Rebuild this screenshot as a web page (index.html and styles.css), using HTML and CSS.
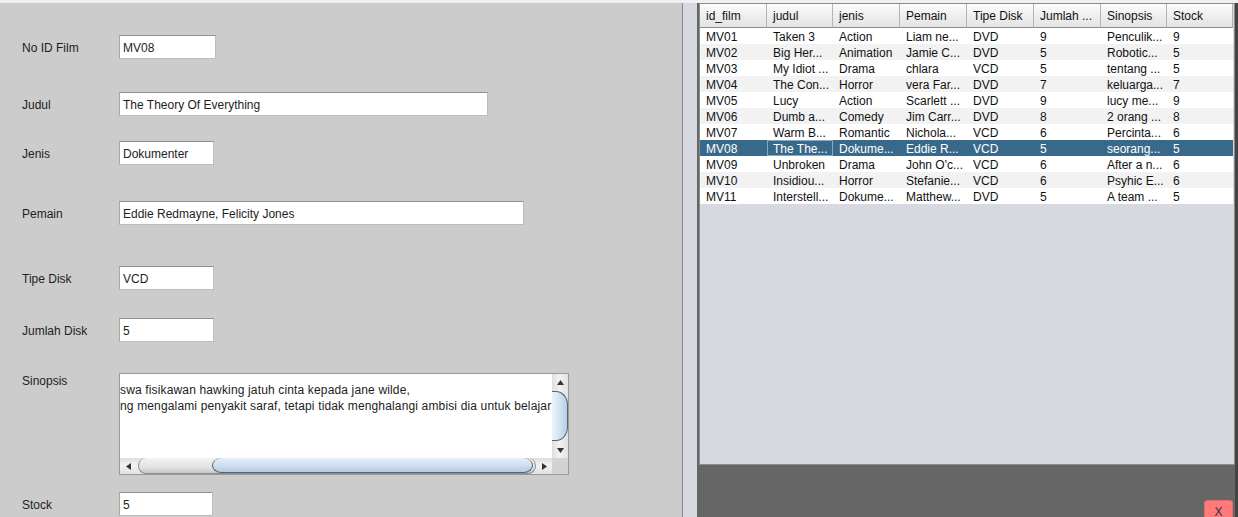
FILE: index.html
```html
<!DOCTYPE html>
<html>
<head>
<meta charset="utf-8">
<title>Data Film</title>
<link rel="stylesheet" href="styles.css">
</head>
<body>
<div class="app">
  <div class="form-panel">
    <div class="row"><span class="label">No ID Film</span><div class="field w97">MV08</div></div>
    <div class="row g33"><span class="label">Judul</span><div class="field w369">The Theory Of Everything</div></div>
    <div class="row g25"><span class="label">Jenis</span><div class="field w95">Dokumenter</div></div>
    <div class="row g36"><span class="label">Pemain</span><div class="field w405">Eddie Redmayne, Felicity Jones</div></div>
    <div class="row g41"><span class="label">Tipe Disk</span><div class="field w95">VCD</div></div>
    <div class="row g28"><span class="label">Jumlah Disk</span><div class="field w95">5</div></div>
    <div class="row top g31"><span class="label">Sinopsis</span>
      <div class="textarea">
        <div class="ta-view">
          <div class="ta-text">swa fisikawan hawking jatuh cinta kepada jane wilde,<br>ng mengalami penyakit saraf, tetapi tidak menghalangi ambisi dia untuk belajar</div>
        </div>
        <div class="vscroll">
          <div class="arrow"><svg width="7" height="5" viewBox="0 0 7 5"><polygon points="0,5 3.5,0 7,5" fill="#333"/></svg></div>
          <div class="vtrack"><div class="vthumb"></div></div>
          <div class="arrow"><svg width="7" height="5" viewBox="0 0 7 5"><polygon points="0,0 7,0 3.5,5" fill="#333"/></svg></div>
        </div>
        <div class="hscroll">
          <div class="arrow"><svg width="5" height="7" viewBox="0 0 5 7"><polygon points="5,0 5,7 0,3.5" fill="#333"/></svg></div>
          <div class="htrack"><div class="hthumb"></div></div>
          <div class="arrow"><svg width="5" height="7" viewBox="0 0 5 7"><polygon points="0,0 5,3.5 0,7" fill="#333"/></svg></div>
        </div>
        <div class="corner"></div>
      </div>
    </div>
    <div class="row g17"><span class="label">Stock</span><div class="field w94">5</div></div>
  </div>
  <div class="divider"></div>
  <div class="table-panel">
    <div class="scroll">
      <table class="grid">
        <colgroup>
          <col class="c67"><col class="c66"><col class="c67"><col class="c67"><col class="c67"><col class="c67"><col class="c66"><col class="c66">
        </colgroup>
        <thead>
          <tr><th>id_film</th><th>judul</th><th>jenis</th><th>Pemain</th><th>Tipe Disk</th><th>Jumlah ...</th><th>Sinopsis</th><th>Stock</th></tr>
        </thead>
        <tbody>
          <tr><td>MV01</td><td>Taken 3</td><td>Action</td><td>Liam ne...</td><td>DVD</td><td>9</td><td>Penculik...</td><td>9</td></tr>
          <tr><td>MV02</td><td>Big Her...</td><td>Animation</td><td>Jamie C...</td><td>DVD</td><td>5</td><td>Robotic...</td><td>5</td></tr>
          <tr><td>MV03</td><td>My Idiot ...</td><td>Drama</td><td>chlara</td><td>VCD</td><td>5</td><td>tentang ...</td><td>5</td></tr>
          <tr><td>MV04</td><td>The Con...</td><td>Horror</td><td>vera Far...</td><td>DVD</td><td>7</td><td>keluarga...</td><td>7</td></tr>
          <tr><td>MV05</td><td>Lucy</td><td>Action</td><td>Scarlett ...</td><td>DVD</td><td>9</td><td>lucy me...</td><td>9</td></tr>
          <tr><td>MV06</td><td>Dumb a...</td><td>Comedy</td><td>Jim Carr...</td><td>DVD</td><td>8</td><td>2 orang ...</td><td>8</td></tr>
          <tr><td>MV07</td><td>Warm B...</td><td>Romantic</td><td>Nichola...</td><td>VCD</td><td>6</td><td>Percinta...</td><td>6</td></tr>
          <tr class="selected"><td>MV08</td><td class="focus">The The...</td><td>Dokume...</td><td>Eddie R...</td><td>VCD</td><td>5</td><td>seorang...</td><td>5</td></tr>
          <tr><td>MV09</td><td>Unbroken</td><td>Drama</td><td>John O'c...</td><td>VCD</td><td>6</td><td>After a n...</td><td>6</td></tr>
          <tr><td>MV10</td><td>Insidiou...</td><td>Horror</td><td>Stefanie...</td><td>VCD</td><td>6</td><td>Psyhic E...</td><td>6</td></tr>
          <tr><td>MV11</td><td>Interstell...</td><td>Dokume...</td><td>Matthew...</td><td>DVD</td><td>5</td><td>A team ...</td><td>5</td></tr>
        </tbody>
      </table>
    </div>
    <div class="bottom">
      <button class="close">X</button>
    </div>
  </div>
</div>
</body>
</html>
```

FILE: styles.css
```css
* { box-sizing: border-box; }
html, body { margin: 0; padding: 0; }
body {
  width: 1238px;
  height: 517px;
  overflow: hidden;
  background: #cccccc;
  font-family: "Liberation Sans", Arial, sans-serif;
  font-size: 12px;
  color: #1e1e1e;
}
.app {
  display: flex;
  height: 517px;
  border-top: 3px solid #f0f0f0;
}

/* ---------- form ---------- */
.form-panel {
  width: 683px;
  flex: none;
  background: #cccccc;
  border-right: 1px solid #8a8a8a;
  padding: 32px 0 0 22px;
  display: flex;
  flex-direction: column;
}
.row { display: flex; align-items: center; }
.row.top { align-items: flex-start; }
.label { width: 97px; flex: none; line-height: 14px; padding-top: 1px; }
.field {
  height: 24px;
  background: #ffffff;
  border: 1px solid #bdbdbd;
  border-top-color: #909090;
  border-left-color: #a8a8a8;
  padding: 1px 3px 0;
  line-height: 22px;
  white-space: nowrap;
  overflow: hidden;
}
.w94 { width: 94px; }
.w95 { width: 95px; }
.w97 { width: 97px; }
.w369 { width: 369px; }
.w405 { width: 405px; }
.g17 { margin-top: 17px; }
.g25 { margin-top: 25px; }
.g28 { margin-top: 28px; }
.g31 { margin-top: 31px; }
.g33 { margin-top: 33px; }
.g36 { margin-top: 36px; }
.g41 { margin-top: 41px; }

/* ---------- textarea with scrollbars ---------- */
.textarea {
  width: 450px;
  height: 102px;
  border: 1px solid #9a9a9a;
  display: grid;
  grid-template-columns: 432px 16px;
  grid-template-rows: 84px 16px;
  background: #ffffff;
}
.ta-view { overflow: hidden; background: #ffffff; }
.ta-text {
  padding-top: 8px;
  line-height: 16px;
  letter-spacing: 0.15px;
  white-space: nowrap;
  color: #222;
}
.vscroll {
  display: flex;
  flex-direction: column;
  background: linear-gradient(to right, #dedede, #f2f2f2 45%, #e2e2e2);
}
.hscroll {
  display: flex;
  background: linear-gradient(#dedede, #f2f2f2 45%, #e2e2e2);
}
.arrow {
  width: 16px;
  height: 16px;
  flex: none;
  display: flex;
  align-items: center;
  justify-content: center;
}
.vtrack { flex: 1; display: flex; padding: 1px 0; }
.vthumb {
  flex: 1;
  border: 1px solid #51657b;
  border-left: none;
  border-radius: 0 12px 12px 0 / 0 14px 14px 0;
  background: linear-gradient(to right, #eef4fa, #d4e3f1 50%, #b6cde3);
}
.htrack {
  flex: 1;
  display: flex;
  margin-left: 2px;
  border: 1px solid #8d8d8d;
  border-top: none;
  border-radius: 8px;
  background: linear-gradient(#f3f3f3, #e3e3e3 60%, #c9c9c9);
}
.hthumb {
  flex: 1;
  margin-left: 73px;
  margin-right: 2px;
  border: 1px solid #51657b;
  border-top: none;
  border-radius: 10px / 8px;
  background: linear-gradient(#e6eff8, #d0e0ef 50%, #b4cbe1);
}
.corner { background: #d3d3d3; }

/* ---------- divider ---------- */
.divider { width: 14px; flex: none; background: #d6d9df; }

/* ---------- table panel ---------- */
.table-panel {
  flex: 1;
  background: #666666;
  border-right: 3px solid #444444;
  padding-left: 2px;
  display: flex;
  flex-direction: column;
}
.scroll {
  height: 462px;
  flex: none;
  border: 1px solid #8c8c8c;
  background: #d6d9df;
  overflow: hidden;
}
.grid {
  width: 533px;
  table-layout: fixed;
  border-collapse: separate;
  border-spacing: 0;
  color: #111;
}
.c66 { width: 66px; }
.c67 { width: 67px; }
.grid th {
  height: 24px;
  padding: 1px 0 0 6px;
  text-align: left;
  font-weight: normal;
  background: linear-gradient(#fcfcfc, #ececec 60%, #e4e4e4);
  border-bottom: 1px solid #8f8f8f;
  border-right: 1px solid #b4b4b4;
  white-space: nowrap;
  overflow: hidden;
}
.grid td {
  height: 16px;
  padding: 2px 0 0 6px;
  line-height: 14px;
  white-space: nowrap;
  overflow: hidden;
  background: #ffffff;
}
.grid tbody tr:nth-child(even) td { background: #f2f2f2; }
.grid tbody tr.selected td { background: #39698a; color: #ffffff; }
.grid tbody tr.selected td.focus { box-shadow: inset 0 0 0 1px #86a9c7; }

.bottom {
  flex: 1;
  display: flex;
  justify-content: flex-end;
  align-items: flex-start;
  padding: 35px 2px 0 0;
  overflow: hidden;
}
.close {
  width: 29px;
  height: 24px;
  flex: none;
  padding: 0;
  background: #ff7b7b;
  border: 1px solid #e56a6a;
  border-radius: 3px 3px 0 0;
  font-family: "Liberation Sans", Arial, sans-serif;
  font-size: 12px;
  line-height: 19px;
  color: #333;
  text-align: center;
}
```
